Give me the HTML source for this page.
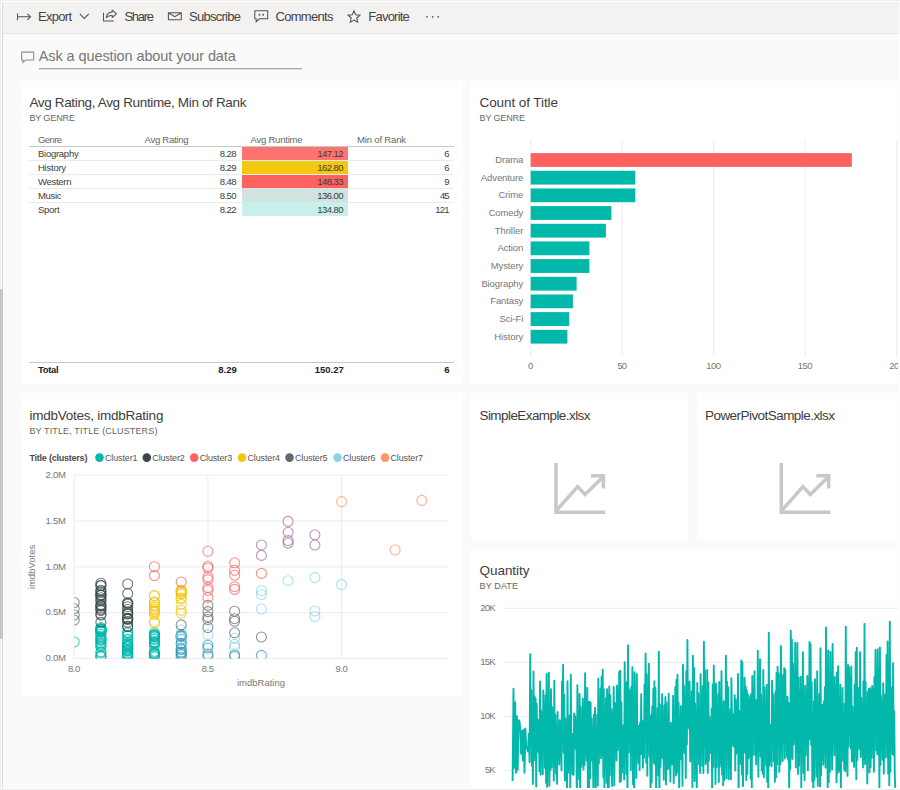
<!DOCTYPE html>
<html lang="en"><head><meta charset="utf-8"><title>Power BI Dashboard</title>
<style>
html,body{margin:0;padding:0;}
body{width:900px;height:790px;overflow:hidden;background:#fafafa;font-family:"Liberation Sans",sans-serif;position:relative;}
.t{position:absolute;white-space:nowrap;line-height:1;}
.abs{position:absolute;}
.tile{position:absolute;background:#fff;}
svg{position:absolute;left:0;top:0;overflow:visible;}
</style></head><body>

<div class="abs" style="left:0;top:0;width:900px;height:34px;background:#f3f2f1;"></div>
<div class="abs" style="left:3px;top:33px;width:897px;height:1px;background:#e6e5e4;"></div>
<div class="abs" style="left:0;top:0;width:900px;height:1px;background:#f0efee;"></div>
<div class="abs" style="left:1px;top:1px;width:899px;height:1px;background:#fff;"></div>
<div class="abs" style="left:0;top:0;width:1px;height:790px;background:#f0efee;"></div>
<div class="abs" style="left:1px;top:1px;width:1px;height:789px;background:#fff;"></div>
<div class="abs" style="left:2px;top:2px;width:1px;height:788px;background:#dddcdb;"></div>
<div class="abs" style="left:3px;top:788px;width:897px;height:1px;background:#fff;z-index:6;"></div>
<div class="abs" style="left:0;top:789px;width:900px;height:1px;background:#f0efee;z-index:6;"></div>
<div class="abs" style="left:898px;top:2px;width:2px;height:32px;background:#f8f7f6;"></div>
<div class="abs" style="left:0;top:289px;width:3px;height:350px;background:#c8c7c6;"></div>
<div class="abs" style="left:898px;top:34px;width:2px;height:756px;background:#fdfdfc;z-index:5;"></div>
<span class="t" style="left:38.00px;top:10.40px;font-size:13px;color:#454341;letter-spacing:-0.714px;">Export</span>
<span class="t" style="left:124.50px;top:10.40px;font-size:13px;color:#454341;letter-spacing:-1.297px;">Share</span>
<span class="t" style="left:189.00px;top:10.40px;font-size:13px;color:#454341;letter-spacing:-0.726px;">Subscribe</span>
<span class="t" style="left:275.50px;top:10.40px;font-size:13px;color:#454341;letter-spacing:-0.692px;">Comments</span>
<span class="t" style="left:368.30px;top:10.40px;font-size:13px;color:#454341;letter-spacing:-0.779px;">Favorite</span>
<svg width="900" height="40" viewBox="0 0 900 40" fill="none" stroke="#55534f" stroke-width="1.05">
<path d="M17.5 13.4V20.2M18 16.8H30.4M27.4 13.8L30.5 16.8L27.4 19.8"/>
<path d="M79.8 13.9L84.3 18.4L88.8 13.9"/>
<path d="M103.5 12.8V20.9H113.8"/>
<path d="M112.2 10.1L116.5 13.8L112.2 17.5V15.6C110 15.4 108 16 106.3 17.7C106.5 14.6 108.6 12.4 112.2 12.1Z" stroke-linejoin="round"/>
<path d="M168.4 12.7H181.3V19.8H168.4ZM168.6 13L174.8 16.7L181.1 13"/>
<path d="M254.8 10.7H267.7V18.8H259.4L256.2 21.8V18.8H254.8Z"/>
<g fill="#55534f" stroke="none"><circle cx="259.5" cy="14.7" r="0.95"/><circle cx="263.2" cy="14.7" r="0.95"/></g>
<path d="M354 10.9L355.7 14.75L359.95 15.15L356.76 18L357.7 22.2L354 20L350.3 22.2L351.24 18L348.05 15.15L352.3 14.75Z"/>
<g fill="#55534f" stroke="none"><circle cx="427" cy="16.8" r="0.9"/><circle cx="432.6" cy="16.8" r="0.9"/><circle cx="438.2" cy="16.8" r="0.9"/></g>
</svg>
<span class="t" style="left:38.80px;top:48.53px;font-size:14.5px;color:#777;letter-spacing:-0.100px;">Ask a question about your data</span>
<div class="abs" style="left:38.5px;top:68px;width:263px;height:1px;background:#a9a9a9;"></div><div class="abs" style="left:38.5px;top:69px;width:263px;height:1px;background:#dedede;"></div>
<svg width="900" height="80" viewBox="0 0 900 80" fill="none" stroke="#8a8a8a" stroke-width="1.05"><path d="M21.7 52.1H33.7V60H25.6L23 62.6V60H21.7Z"/></svg>
<div class="tile" style="left:21px;top:81px;width:442px;height:303px;"></div>
<span class="t" style="left:29.40px;top:95.57px;font-size:13.5px;color:#3d3d3d;letter-spacing:-0.346px;">Avg Rating, Avg Runtime, Min of Rank</span>
<span class="t" style="left:29.40px;top:114.08px;font-size:9px;color:#666;letter-spacing:-0.121px;">BY GENRE</span>
<span class="t" style="left:38.00px;top:134.96px;font-size:9.5px;color:#666;letter-spacing:-0.600px;">Genre</span>
<span class="t" style="left:144.50px;top:134.96px;font-size:9.5px;color:#666;letter-spacing:-0.255px;">Avg Rating</span>
<span class="t" style="left:250.50px;top:134.96px;font-size:9.5px;color:#666;letter-spacing:-0.221px;">Avg Runtime</span>
<span class="t" style="left:357.00px;top:134.96px;font-size:9.5px;color:#666;letter-spacing:-0.168px;">Min of Rank</span>
<div class="abs" style="left:29px;top:146px;width:425px;height:1px;background:#c8c8c8;"></div>
<div class="abs" style="left:241.5px;top:147.0px;width:106.5px;height:13.8px;background:#fd7370;"></div>
<div class="abs" style="left:29px;top:160.3px;width:425px;height:1px;background:#ebebeb;"></div>
<span class="t" style="left:38.00px;top:149.46px;font-size:9.5px;color:#3c3c3c;letter-spacing:-0.267px;">Biography</span>
<span class="t" style="left:219.86px;top:149.46px;font-size:9.5px;color:#3c3c3c;letter-spacing:-0.616px;">8.28</span>
<span class="t" style="left:317.35px;top:149.46px;font-size:9.5px;color:#3c3c3c;letter-spacing:-0.581px;">147.12</span>
<span class="t" style="left:444.22px;top:149.46px;font-size:9.5px;color:#3c3c3c;">6</span>
<div class="abs" style="left:241.5px;top:160.8px;width:106.5px;height:13.8px;background:#f2c811;"></div>
<div class="abs" style="left:29px;top:174.1px;width:425px;height:1px;background:#ebebeb;"></div>
<span class="t" style="left:38.00px;top:163.26px;font-size:9.5px;color:#3c3c3c;letter-spacing:-0.246px;">History</span>
<span class="t" style="left:219.86px;top:163.26px;font-size:9.5px;color:#3c3c3c;letter-spacing:-0.616px;">8.29</span>
<span class="t" style="left:317.35px;top:163.26px;font-size:9.5px;color:#3c3c3c;letter-spacing:-0.581px;">162.80</span>
<span class="t" style="left:444.22px;top:163.26px;font-size:9.5px;color:#3c3c3c;">6</span>
<div class="abs" style="left:241.5px;top:174.6px;width:106.5px;height:13.8px;background:#fd625e;"></div>
<div class="abs" style="left:29px;top:187.9px;width:425px;height:1px;background:#ebebeb;"></div>
<span class="t" style="left:38.00px;top:177.06px;font-size:9.5px;color:#3c3c3c;letter-spacing:-0.293px;">Western</span>
<span class="t" style="left:219.86px;top:177.06px;font-size:9.5px;color:#3c3c3c;letter-spacing:-0.616px;">8.48</span>
<span class="t" style="left:317.35px;top:177.06px;font-size:9.5px;color:#3c3c3c;letter-spacing:-0.581px;">148.33</span>
<span class="t" style="left:444.22px;top:177.06px;font-size:9.5px;color:#3c3c3c;">9</span>
<div class="abs" style="left:241.5px;top:188.4px;width:106.5px;height:13.8px;background:#d0e3e0;"></div>
<div class="abs" style="left:29px;top:201.7px;width:425px;height:1px;background:#ebebeb;"></div>
<span class="t" style="left:38.00px;top:190.86px;font-size:9.5px;color:#3c3c3c;letter-spacing:-0.310px;">Music</span>
<span class="t" style="left:219.86px;top:190.86px;font-size:9.5px;color:#3c3c3c;letter-spacing:-0.616px;">8.50</span>
<span class="t" style="left:317.35px;top:190.86px;font-size:9.5px;color:#3c3c3c;letter-spacing:-0.581px;">136.00</span>
<span class="t" style="left:439.99px;top:190.86px;font-size:9.5px;color:#3c3c3c;letter-spacing:-1.057px;">45</span>
<div class="abs" style="left:241.5px;top:202.2px;width:106.5px;height:13.8px;background:#c9efec;"></div>
<span class="t" style="left:38.00px;top:204.66px;font-size:9.5px;color:#3c3c3c;letter-spacing:-0.284px;">Sport</span>
<span class="t" style="left:219.86px;top:204.66px;font-size:9.5px;color:#3c3c3c;letter-spacing:-0.616px;">8.22</span>
<span class="t" style="left:317.35px;top:204.66px;font-size:9.5px;color:#3c3c3c;letter-spacing:-0.581px;">134.80</span>
<span class="t" style="left:435.24px;top:204.66px;font-size:9.5px;color:#3c3c3c;letter-spacing:-0.792px;">121</span>
<div class="abs" style="left:29px;top:362px;width:425px;height:1px;background:#c8c8c8;"></div>
<span class="t" style="left:38.00px;top:365.26px;font-size:9.5px;color:#222;letter-spacing:-0.330px;font-weight:bold;">Total</span>
<span class="t" style="left:218.31px;top:365.26px;font-size:9.5px;color:#222;font-weight:bold;">8.29</span>
<span class="t" style="left:314.75px;top:365.26px;font-size:9.5px;color:#222;font-weight:bold;">150.27</span>
<span class="t" style="left:444.22px;top:365.26px;font-size:9.5px;color:#222;font-weight:bold;">6</span>
<div class="tile" style="left:471px;top:81px;width:429px;height:303px;"></div>
<span class="t" style="left:479.50px;top:95.57px;font-size:13.5px;color:#3d3d3d;letter-spacing:-0.080px;">Count of Title</span>
<span class="t" style="left:479.50px;top:114.08px;font-size:9px;color:#666;letter-spacing:-0.121px;">BY GENRE</span>
<svg width="900" height="790" viewBox="0 0 900 790"><rect x="530.2" y="140" width="1" height="216.5" fill="#ececec"/><rect x="621.7" y="140" width="1" height="216.5" fill="#ececec"/><rect x="713.2" y="140" width="1" height="216.5" fill="#ececec"/><rect x="804.7" y="140" width="1" height="216.5" fill="#ececec"/><rect x="896.2" y="140" width="1" height="216.5" fill="#ececec"/><rect x="530.7" y="153.10" width="321.1" height="13.8" fill="#fd625e"/><rect x="530.7" y="170.77" width="104.6" height="13.8" fill="#01b8aa"/><rect x="530.7" y="188.44" width="104.6" height="13.8" fill="#01b8aa"/><rect x="530.7" y="206.11" width="80.7" height="13.8" fill="#01b8aa"/><rect x="530.7" y="223.78" width="75.2" height="13.8" fill="#01b8aa"/><rect x="530.7" y="241.45" width="58.7" height="13.8" fill="#01b8aa"/><rect x="530.7" y="259.12" width="58.7" height="13.8" fill="#01b8aa"/><rect x="530.7" y="276.79" width="45.9" height="13.8" fill="#01b8aa"/><rect x="530.7" y="294.46" width="42.2" height="13.8" fill="#01b8aa"/><rect x="530.7" y="312.13" width="38.5" height="13.8" fill="#01b8aa"/><rect x="530.7" y="329.80" width="36.7" height="13.8" fill="#01b8aa"/></svg>
<span class="t" style="left:495.37px;top:154.96px;font-size:9.5px;color:#777;letter-spacing:-0.143px;">Drama</span>
<span class="t" style="left:480.86px;top:172.96px;font-size:9.5px;color:#777;letter-spacing:-0.108px;">Adventure</span>
<span class="t" style="left:498.48px;top:189.96px;font-size:9.5px;color:#777;letter-spacing:-0.127px;">Crime</span>
<span class="t" style="left:488.63px;top:207.96px;font-size:9.5px;color:#777;letter-spacing:-0.141px;">Comedy</span>
<span class="t" style="left:494.85px;top:225.96px;font-size:9.5px;color:#777;letter-spacing:-0.083px;">Thriller</span>
<span class="t" style="left:497.43px;top:242.96px;font-size:9.5px;color:#777;letter-spacing:-0.106px;">Action</span>
<span class="t" style="left:490.72px;top:260.96px;font-size:9.5px;color:#777;letter-spacing:-0.111px;">Mystery</span>
<span class="t" style="left:481.38px;top:278.96px;font-size:9.5px;color:#777;letter-spacing:-0.107px;">Biography</span>
<span class="t" style="left:490.19px;top:295.96px;font-size:9.5px;color:#777;letter-spacing:-0.113px;">Fantasy</span>
<span class="t" style="left:499.51px;top:313.96px;font-size:9.5px;color:#777;letter-spacing:-0.097px;">Sci-Fi</span>
<span class="t" style="left:494.33px;top:331.96px;font-size:9.5px;color:#777;letter-spacing:-0.099px;">History</span>
<span class="t" style="left:528.06px;top:361.46px;font-size:9.5px;color:#777;">0</span>
<span class="t" style="left:617.23px;top:361.46px;font-size:9.5px;color:#777;letter-spacing:-0.634px;">50</span>
<span class="t" style="left:706.25px;top:361.46px;font-size:9.5px;color:#777;letter-spacing:-0.475px;">100</span>
<span class="t" style="left:797.75px;top:361.46px;font-size:9.5px;color:#777;letter-spacing:-0.475px;">150</span>
<span class="t" style="left:889.25px;top:361.46px;font-size:9.5px;color:#777;letter-spacing:-0.475px;">200</span>
<div class="tile" style="left:21px;top:393px;width:442px;height:303px;"></div>
<span class="t" style="left:29.40px;top:408.57px;font-size:13.5px;color:#3d3d3d;letter-spacing:-0.241px;">imdbVotes, imdbRating</span>
<span class="t" style="left:29.40px;top:427.18px;font-size:9px;color:#666;letter-spacing:0.139px;">BY TITLE, TITLE (CLUSTERS)</span>
<span class="t" style="left:29.40px;top:453.68px;font-size:9px;color:#4a4a4a;letter-spacing:-0.223px;font-weight:bold;">Title (clusters)</span>
<svg width="900" height="790" viewBox="0 0 900 790"><circle cx="99.5" cy="457.6" r="4.3" fill="#01b8aa"/><circle cx="146.8" cy="457.6" r="4.3" fill="#374649"/><circle cx="194.2" cy="457.6" r="4.3" fill="#fd625e"/><circle cx="242" cy="457.6" r="4.3" fill="#f2c80f"/><circle cx="289.5" cy="457.6" r="4.3" fill="#5f6b6d"/><circle cx="337.5" cy="457.6" r="4.3" fill="#8ad4eb"/><circle cx="385" cy="457.6" r="4.3" fill="#fe9666"/><rect x="74.2" y="658.0" width="374.0" height="1" fill="#ececec"/><rect x="74.2" y="612.2" width="374.0" height="1" fill="#ececec"/><rect x="74.2" y="566.4" width="374.0" height="1" fill="#ececec"/><rect x="74.2" y="520.5" width="374.0" height="1" fill="#ececec"/><rect x="74.2" y="474.7" width="374.0" height="1" fill="#ececec"/><rect x="73.7" y="475.2" width="1" height="183.3" fill="#ececec"/><rect x="207.4" y="475.2" width="1" height="183.3" fill="#ececec"/><rect x="341.1" y="475.2" width="1" height="183.3" fill="#ececec"/><clipPath id="cp"><rect x="74.2" y="465.2" width="384.0" height="193.3"/></clipPath><g clip-path="url(#cp)" fill="none" stroke-width="1.1"><circle cx="74.2" cy="602.5" r="5" stroke="#5f6b6d" stroke-opacity="0.72"/><circle cx="74.2" cy="608.7" r="5" stroke="#5f6b6d" stroke-opacity="0.72"/><circle cx="74.2" cy="615.0" r="5" stroke="#5f6b6d" stroke-opacity="0.72"/><circle cx="74.2" cy="620.0" r="5" stroke="#5f6b6d" stroke-opacity="0.72"/><circle cx="74.2" cy="642.0" r="5" stroke="#01b8aa" stroke-opacity="0.72"/><circle cx="100.9" cy="627.5" r="5" stroke="#01b8aa" stroke-opacity="0.72"/><circle cx="100.9" cy="628.6" r="5" stroke="#01b8aa" stroke-opacity="0.72"/><circle cx="100.9" cy="628.9" r="5" stroke="#01b8aa" stroke-opacity="0.72"/><circle cx="100.9" cy="629.2" r="5" stroke="#01b8aa" stroke-opacity="0.72"/><circle cx="100.9" cy="629.6" r="5" stroke="#01b8aa" stroke-opacity="0.72"/><circle cx="100.9" cy="629.6" r="5" stroke="#01b8aa" stroke-opacity="0.72"/><circle cx="100.9" cy="630.2" r="5" stroke="#01b8aa" stroke-opacity="0.72"/><circle cx="100.9" cy="631.0" r="5" stroke="#01b8aa" stroke-opacity="0.72"/><circle cx="100.9" cy="631.2" r="5" stroke="#01b8aa" stroke-opacity="0.72"/><circle cx="100.9" cy="631.8" r="5" stroke="#01b8aa" stroke-opacity="0.72"/><circle cx="100.9" cy="632.0" r="5" stroke="#01b8aa" stroke-opacity="0.72"/><circle cx="100.9" cy="634.1" r="5" stroke="#01b8aa" stroke-opacity="0.72"/><circle cx="100.9" cy="636.0" r="5" stroke="#01b8aa" stroke-opacity="0.72"/><circle cx="100.9" cy="637.1" r="5" stroke="#01b8aa" stroke-opacity="0.72"/><circle cx="100.9" cy="638.3" r="5" stroke="#01b8aa" stroke-opacity="0.72"/><circle cx="100.9" cy="639.2" r="5" stroke="#01b8aa" stroke-opacity="0.72"/><circle cx="100.9" cy="640.0" r="5" stroke="#01b8aa" stroke-opacity="0.72"/><circle cx="100.9" cy="640.3" r="5" stroke="#01b8aa" stroke-opacity="0.72"/><circle cx="100.9" cy="642.5" r="5" stroke="#01b8aa" stroke-opacity="0.72"/><circle cx="100.9" cy="643.3" r="5" stroke="#01b8aa" stroke-opacity="0.72"/><circle cx="100.9" cy="644.5" r="5" stroke="#01b8aa" stroke-opacity="0.72"/><circle cx="100.9" cy="646.0" r="5" stroke="#01b8aa" stroke-opacity="0.72"/><circle cx="100.9" cy="646.7" r="5" stroke="#01b8aa" stroke-opacity="0.72"/><circle cx="100.9" cy="651.9" r="5" stroke="#01b8aa" stroke-opacity="0.72"/><circle cx="100.9" cy="652.8" r="5" stroke="#01b8aa" stroke-opacity="0.72"/><circle cx="100.9" cy="655.5" r="5" stroke="#01b8aa" stroke-opacity="0.72"/><circle cx="100.9" cy="656.3" r="5" stroke="#01b8aa" stroke-opacity="0.72"/><circle cx="100.9" cy="657.0" r="5" stroke="#01b8aa" stroke-opacity="0.72"/><circle cx="100.9" cy="583.2" r="5" stroke="#374649" stroke-opacity="0.72"/><circle cx="100.9" cy="585.5" r="5" stroke="#374649" stroke-opacity="0.72"/><circle cx="100.9" cy="585.6" r="5" stroke="#374649" stroke-opacity="0.72"/><circle cx="100.9" cy="590.2" r="5" stroke="#374649" stroke-opacity="0.72"/><circle cx="100.9" cy="591.2" r="5" stroke="#374649" stroke-opacity="0.72"/><circle cx="100.9" cy="592.7" r="5" stroke="#374649" stroke-opacity="0.72"/><circle cx="100.9" cy="594.9" r="5" stroke="#374649" stroke-opacity="0.72"/><circle cx="100.9" cy="595.2" r="5" stroke="#374649" stroke-opacity="0.72"/><circle cx="100.9" cy="595.5" r="5" stroke="#374649" stroke-opacity="0.72"/><circle cx="100.9" cy="597.7" r="5" stroke="#374649" stroke-opacity="0.72"/><circle cx="100.9" cy="599.9" r="5" stroke="#374649" stroke-opacity="0.72"/><circle cx="100.9" cy="600.9" r="5" stroke="#374649" stroke-opacity="0.72"/><circle cx="100.9" cy="604.6" r="5" stroke="#374649" stroke-opacity="0.72"/><circle cx="100.9" cy="605.9" r="5" stroke="#374649" stroke-opacity="0.72"/><circle cx="100.9" cy="606.0" r="5" stroke="#374649" stroke-opacity="0.72"/><circle cx="100.9" cy="608.1" r="5" stroke="#374649" stroke-opacity="0.72"/><circle cx="100.9" cy="609.7" r="5" stroke="#374649" stroke-opacity="0.72"/><circle cx="100.9" cy="610.5" r="5" stroke="#374649" stroke-opacity="0.72"/><circle cx="100.9" cy="614.2" r="5" stroke="#374649" stroke-opacity="0.72"/><circle cx="100.9" cy="615.0" r="5" stroke="#374649" stroke-opacity="0.72"/><circle cx="100.9" cy="622.2" r="5" stroke="#374649" stroke-opacity="0.72"/><circle cx="127.7" cy="632.0" r="5" stroke="#01b8aa" stroke-opacity="0.72"/><circle cx="127.7" cy="633.0" r="5" stroke="#01b8aa" stroke-opacity="0.72"/><circle cx="127.7" cy="635.0" r="5" stroke="#01b8aa" stroke-opacity="0.72"/><circle cx="127.7" cy="635.8" r="5" stroke="#01b8aa" stroke-opacity="0.72"/><circle cx="127.7" cy="639.2" r="5" stroke="#01b8aa" stroke-opacity="0.72"/><circle cx="127.7" cy="639.8" r="5" stroke="#01b8aa" stroke-opacity="0.72"/><circle cx="127.7" cy="642.5" r="5" stroke="#01b8aa" stroke-opacity="0.72"/><circle cx="127.7" cy="643.4" r="5" stroke="#01b8aa" stroke-opacity="0.72"/><circle cx="127.7" cy="644.2" r="5" stroke="#01b8aa" stroke-opacity="0.72"/><circle cx="127.7" cy="645.1" r="5" stroke="#01b8aa" stroke-opacity="0.72"/><circle cx="127.7" cy="646.3" r="5" stroke="#01b8aa" stroke-opacity="0.72"/><circle cx="127.7" cy="646.4" r="5" stroke="#01b8aa" stroke-opacity="0.72"/><circle cx="127.7" cy="646.5" r="5" stroke="#01b8aa" stroke-opacity="0.72"/><circle cx="127.7" cy="646.9" r="5" stroke="#01b8aa" stroke-opacity="0.72"/><circle cx="127.7" cy="648.7" r="5" stroke="#01b8aa" stroke-opacity="0.72"/><circle cx="127.7" cy="649.4" r="5" stroke="#01b8aa" stroke-opacity="0.72"/><circle cx="127.7" cy="650.2" r="5" stroke="#01b8aa" stroke-opacity="0.72"/><circle cx="127.7" cy="650.9" r="5" stroke="#01b8aa" stroke-opacity="0.72"/><circle cx="127.7" cy="651.1" r="5" stroke="#01b8aa" stroke-opacity="0.72"/><circle cx="127.7" cy="653.0" r="5" stroke="#01b8aa" stroke-opacity="0.72"/><circle cx="127.7" cy="653.9" r="5" stroke="#01b8aa" stroke-opacity="0.72"/><circle cx="127.7" cy="653.9" r="5" stroke="#01b8aa" stroke-opacity="0.72"/><circle cx="127.7" cy="655.6" r="5" stroke="#01b8aa" stroke-opacity="0.72"/><circle cx="127.7" cy="656.5" r="5" stroke="#01b8aa" stroke-opacity="0.72"/><circle cx="127.7" cy="657.0" r="5" stroke="#01b8aa" stroke-opacity="0.72"/><circle cx="127.7" cy="584.0" r="5" stroke="#374649" stroke-opacity="0.72"/><circle cx="127.7" cy="593.5" r="5" stroke="#374649" stroke-opacity="0.72"/><circle cx="127.7" cy="602.7" r="5" stroke="#374649" stroke-opacity="0.72"/><circle cx="127.7" cy="603.2" r="5" stroke="#374649" stroke-opacity="0.72"/><circle cx="127.7" cy="604.1" r="5" stroke="#374649" stroke-opacity="0.72"/><circle cx="127.7" cy="606.7" r="5" stroke="#374649" stroke-opacity="0.72"/><circle cx="127.7" cy="609.5" r="5" stroke="#374649" stroke-opacity="0.72"/><circle cx="127.7" cy="611.9" r="5" stroke="#374649" stroke-opacity="0.72"/><circle cx="127.7" cy="613.7" r="5" stroke="#374649" stroke-opacity="0.72"/><circle cx="127.7" cy="614.0" r="5" stroke="#374649" stroke-opacity="0.72"/><circle cx="127.7" cy="618.2" r="5" stroke="#374649" stroke-opacity="0.72"/><circle cx="127.7" cy="618.6" r="5" stroke="#374649" stroke-opacity="0.72"/><circle cx="127.7" cy="618.7" r="5" stroke="#374649" stroke-opacity="0.72"/><circle cx="127.7" cy="619.5" r="5" stroke="#374649" stroke-opacity="0.72"/><circle cx="127.7" cy="622.3" r="5" stroke="#374649" stroke-opacity="0.72"/><circle cx="127.7" cy="626.4" r="5" stroke="#374649" stroke-opacity="0.72"/><circle cx="127.7" cy="626.6" r="5" stroke="#374649" stroke-opacity="0.72"/><circle cx="154.4" cy="632.8" r="5" stroke="#01b8aa" stroke-opacity="0.72"/><circle cx="154.4" cy="634.2" r="5" stroke="#01b8aa" stroke-opacity="0.72"/><circle cx="154.4" cy="634.8" r="5" stroke="#01b8aa" stroke-opacity="0.72"/><circle cx="154.4" cy="635.6" r="5" stroke="#01b8aa" stroke-opacity="0.72"/><circle cx="154.4" cy="635.9" r="5" stroke="#01b8aa" stroke-opacity="0.72"/><circle cx="154.4" cy="636.5" r="5" stroke="#01b8aa" stroke-opacity="0.72"/><circle cx="154.4" cy="637.1" r="5" stroke="#01b8aa" stroke-opacity="0.72"/><circle cx="154.4" cy="638.8" r="5" stroke="#01b8aa" stroke-opacity="0.72"/><circle cx="154.4" cy="639.5" r="5" stroke="#01b8aa" stroke-opacity="0.72"/><circle cx="154.4" cy="641.5" r="5" stroke="#01b8aa" stroke-opacity="0.72"/><circle cx="154.4" cy="642.3" r="5" stroke="#01b8aa" stroke-opacity="0.72"/><circle cx="154.4" cy="642.9" r="5" stroke="#01b8aa" stroke-opacity="0.72"/><circle cx="154.4" cy="643.7" r="5" stroke="#01b8aa" stroke-opacity="0.72"/><circle cx="154.4" cy="646.1" r="5" stroke="#01b8aa" stroke-opacity="0.72"/><circle cx="154.4" cy="651.4" r="5" stroke="#01b8aa" stroke-opacity="0.72"/><circle cx="154.4" cy="652.6" r="5" stroke="#01b8aa" stroke-opacity="0.72"/><circle cx="154.4" cy="653.7" r="5" stroke="#01b8aa" stroke-opacity="0.72"/><circle cx="154.4" cy="653.9" r="5" stroke="#01b8aa" stroke-opacity="0.72"/><circle cx="154.4" cy="654.2" r="5" stroke="#01b8aa" stroke-opacity="0.72"/><circle cx="154.4" cy="654.2" r="5" stroke="#01b8aa" stroke-opacity="0.72"/><circle cx="154.4" cy="656.0" r="5" stroke="#01b8aa" stroke-opacity="0.72"/><circle cx="154.4" cy="657.0" r="5" stroke="#01b8aa" stroke-opacity="0.72"/><circle cx="154.4" cy="595.6" r="5" stroke="#f2c80f" stroke-opacity="0.72"/><circle cx="154.4" cy="595.7" r="5" stroke="#f2c80f" stroke-opacity="0.72"/><circle cx="154.4" cy="602.0" r="5" stroke="#f2c80f" stroke-opacity="0.72"/><circle cx="154.4" cy="602.0" r="5" stroke="#f2c80f" stroke-opacity="0.72"/><circle cx="154.4" cy="602.8" r="5" stroke="#f2c80f" stroke-opacity="0.72"/><circle cx="154.4" cy="605.7" r="5" stroke="#f2c80f" stroke-opacity="0.72"/><circle cx="154.4" cy="607.1" r="5" stroke="#f2c80f" stroke-opacity="0.72"/><circle cx="154.4" cy="608.9" r="5" stroke="#f2c80f" stroke-opacity="0.72"/><circle cx="154.4" cy="609.7" r="5" stroke="#f2c80f" stroke-opacity="0.72"/><circle cx="154.4" cy="611.1" r="5" stroke="#f2c80f" stroke-opacity="0.72"/><circle cx="154.4" cy="611.7" r="5" stroke="#f2c80f" stroke-opacity="0.72"/><circle cx="154.4" cy="612.5" r="5" stroke="#f2c80f" stroke-opacity="0.72"/><circle cx="154.4" cy="614.5" r="5" stroke="#f2c80f" stroke-opacity="0.72"/><circle cx="154.4" cy="621.7" r="5" stroke="#f2c80f" stroke-opacity="0.72"/><circle cx="154.4" cy="623.0" r="5" stroke="#f2c80f" stroke-opacity="0.72"/><circle cx="154.4" cy="566.7" r="5" stroke="#fd625e" stroke-opacity="0.72"/><circle cx="154.4" cy="575.6" r="5" stroke="#fd625e" stroke-opacity="0.72"/><circle cx="181.2" cy="634.6" r="5" stroke="#3599b8" stroke-opacity="0.72"/><circle cx="181.2" cy="635.8" r="5" stroke="#3599b8" stroke-opacity="0.72"/><circle cx="181.2" cy="636.0" r="5" stroke="#3599b8" stroke-opacity="0.72"/><circle cx="181.2" cy="636.1" r="5" stroke="#3599b8" stroke-opacity="0.72"/><circle cx="181.2" cy="636.9" r="5" stroke="#3599b8" stroke-opacity="0.72"/><circle cx="181.2" cy="639.3" r="5" stroke="#3599b8" stroke-opacity="0.72"/><circle cx="181.2" cy="643.4" r="5" stroke="#3599b8" stroke-opacity="0.72"/><circle cx="181.2" cy="643.5" r="5" stroke="#3599b8" stroke-opacity="0.72"/><circle cx="181.2" cy="648.8" r="5" stroke="#3599b8" stroke-opacity="0.72"/><circle cx="181.2" cy="649.7" r="5" stroke="#3599b8" stroke-opacity="0.72"/><circle cx="181.2" cy="652.1" r="5" stroke="#3599b8" stroke-opacity="0.72"/><circle cx="181.2" cy="652.5" r="5" stroke="#3599b8" stroke-opacity="0.72"/><circle cx="181.2" cy="654.2" r="5" stroke="#3599b8" stroke-opacity="0.72"/><circle cx="181.2" cy="654.7" r="5" stroke="#3599b8" stroke-opacity="0.72"/><circle cx="181.2" cy="657.0" r="5" stroke="#3599b8" stroke-opacity="0.72"/><circle cx="181.2" cy="630.0" r="5" stroke="#8ad4eb" stroke-opacity="0.72"/><circle cx="181.2" cy="637.0" r="5" stroke="#8ad4eb" stroke-opacity="0.72"/><circle cx="181.2" cy="624.9" r="5" stroke="#5f6b6d" stroke-opacity="0.72"/><circle cx="181.2" cy="590.3" r="5" stroke="#f2c80f" stroke-opacity="0.72"/><circle cx="181.2" cy="590.3" r="5" stroke="#f2c80f" stroke-opacity="0.72"/><circle cx="181.2" cy="590.9" r="5" stroke="#f2c80f" stroke-opacity="0.72"/><circle cx="181.2" cy="591.5" r="5" stroke="#f2c80f" stroke-opacity="0.72"/><circle cx="181.2" cy="592.6" r="5" stroke="#f2c80f" stroke-opacity="0.72"/><circle cx="181.2" cy="593.8" r="5" stroke="#f2c80f" stroke-opacity="0.72"/><circle cx="181.2" cy="594.0" r="5" stroke="#f2c80f" stroke-opacity="0.72"/><circle cx="181.2" cy="598.1" r="5" stroke="#f2c80f" stroke-opacity="0.72"/><circle cx="181.2" cy="598.7" r="5" stroke="#f2c80f" stroke-opacity="0.72"/><circle cx="181.2" cy="604.4" r="5" stroke="#f2c80f" stroke-opacity="0.72"/><circle cx="181.2" cy="610.4" r="5" stroke="#f2c80f" stroke-opacity="0.72"/><circle cx="181.2" cy="613.3" r="5" stroke="#f2c80f" stroke-opacity="0.72"/><circle cx="181.2" cy="582.0" r="5" stroke="#fd625e" stroke-opacity="0.72"/><circle cx="207.9" cy="645.2" r="5" stroke="#3599b8" stroke-opacity="0.72"/><circle cx="207.9" cy="648.0" r="5" stroke="#3599b8" stroke-opacity="0.72"/><circle cx="207.9" cy="654.0" r="5" stroke="#3599b8" stroke-opacity="0.72"/><circle cx="207.9" cy="656.2" r="5" stroke="#3599b8" stroke-opacity="0.72"/><circle cx="207.9" cy="634.6" r="5" stroke="#8ad4eb" stroke-opacity="0.72"/><circle cx="207.9" cy="605.4" r="5" stroke="#5f6b6d" stroke-opacity="0.72"/><circle cx="207.9" cy="611.6" r="5" stroke="#5f6b6d" stroke-opacity="0.72"/><circle cx="207.9" cy="616.9" r="5" stroke="#5f6b6d" stroke-opacity="0.72"/><circle cx="207.9" cy="619.5" r="5" stroke="#5f6b6d" stroke-opacity="0.72"/><circle cx="207.9" cy="627.5" r="5" stroke="#5f6b6d" stroke-opacity="0.72"/><circle cx="207.9" cy="551.3" r="5" stroke="#fd625e" stroke-opacity="0.72"/><circle cx="207.9" cy="566.3" r="5" stroke="#fd625e" stroke-opacity="0.72"/><circle cx="207.9" cy="568.0" r="5" stroke="#fd625e" stroke-opacity="0.72"/><circle cx="207.9" cy="577.0" r="5" stroke="#fd625e" stroke-opacity="0.72"/><circle cx="207.9" cy="579.6" r="5" stroke="#fd625e" stroke-opacity="0.72"/><circle cx="207.9" cy="587.6" r="5" stroke="#fd625e" stroke-opacity="0.72"/><circle cx="207.9" cy="590.3" r="5" stroke="#fd625e" stroke-opacity="0.72"/><circle cx="207.9" cy="597.4" r="5" stroke="#fd625e" stroke-opacity="0.72"/><circle cx="234.6" cy="655.0" r="5" stroke="#3599b8" stroke-opacity="0.72"/><circle cx="234.6" cy="656.2" r="5" stroke="#3599b8" stroke-opacity="0.72"/><circle cx="234.6" cy="638.2" r="5" stroke="#8ad4eb" stroke-opacity="0.72"/><circle cx="234.6" cy="644.4" r="5" stroke="#8ad4eb" stroke-opacity="0.72"/><circle cx="234.6" cy="647.4" r="5" stroke="#8ad4eb" stroke-opacity="0.72"/><circle cx="234.6" cy="611.2" r="5" stroke="#5f6b6d" stroke-opacity="0.72"/><circle cx="234.6" cy="618.7" r="5" stroke="#5f6b6d" stroke-opacity="0.72"/><circle cx="234.6" cy="621.3" r="5" stroke="#5f6b6d" stroke-opacity="0.72"/><circle cx="234.6" cy="632.8" r="5" stroke="#5f6b6d" stroke-opacity="0.72"/><circle cx="234.6" cy="562.8" r="5" stroke="#fd625e" stroke-opacity="0.72"/><circle cx="234.6" cy="570.4" r="5" stroke="#fd625e" stroke-opacity="0.72"/><circle cx="234.6" cy="575.2" r="5" stroke="#fd625e" stroke-opacity="0.72"/><circle cx="234.6" cy="586.7" r="5" stroke="#fd625e" stroke-opacity="0.72"/><circle cx="234.6" cy="589.4" r="5" stroke="#fd625e" stroke-opacity="0.72"/><circle cx="261.4" cy="655.4" r="5" stroke="#3599b8" stroke-opacity="0.72"/><circle cx="261.4" cy="637.0" r="5" stroke="#5f6b6d" stroke-opacity="0.72"/><circle cx="261.4" cy="590.7" r="5" stroke="#8ad4eb" stroke-opacity="0.72"/><circle cx="261.4" cy="594.7" r="5" stroke="#8ad4eb" stroke-opacity="0.72"/><circle cx="261.4" cy="609.0" r="5" stroke="#8ad4eb" stroke-opacity="0.72"/><circle cx="261.4" cy="573.4" r="5" stroke="#fd625e" stroke-opacity="0.72"/><circle cx="261.4" cy="545.0" r="5" stroke="#a66999" stroke-opacity="0.72"/><circle cx="261.4" cy="555.4" r="5" stroke="#a66999" stroke-opacity="0.72"/><circle cx="288.1" cy="521.4" r="5" stroke="#a66999" stroke-opacity="0.72"/><circle cx="288.1" cy="532.3" r="5" stroke="#a66999" stroke-opacity="0.72"/><circle cx="288.1" cy="540.5" r="5" stroke="#a66999" stroke-opacity="0.72"/><circle cx="288.1" cy="543.0" r="5" stroke="#a66999" stroke-opacity="0.72"/><circle cx="288.1" cy="580.7" r="5" stroke="#8ad4eb" stroke-opacity="0.72"/><circle cx="314.9" cy="534.8" r="5" stroke="#a66999" stroke-opacity="0.72"/><circle cx="314.9" cy="545.0" r="5" stroke="#a66999" stroke-opacity="0.72"/><circle cx="314.9" cy="577.6" r="5" stroke="#8ad4eb" stroke-opacity="0.72"/><circle cx="314.9" cy="611.0" r="5" stroke="#8ad4eb" stroke-opacity="0.72"/><circle cx="314.9" cy="616.5" r="5" stroke="#8ad4eb" stroke-opacity="0.72"/><circle cx="341.6" cy="501.6" r="5" stroke="#fe9666" stroke-opacity="0.72"/><circle cx="341.6" cy="584.6" r="5" stroke="#8ad4eb" stroke-opacity="0.72"/><circle cx="395.1" cy="550.0" r="5" stroke="#fe9666" stroke-opacity="0.72"/><circle cx="421.8" cy="500.4" r="5" stroke="#fe9666" stroke-opacity="0.72"/></g></svg>
<span class="t" style="left:105.00px;top:453.68px;font-size:9px;color:#555;letter-spacing:-0.144px;">Cluster1</span>
<span class="t" style="left:152.30px;top:453.68px;font-size:9px;color:#555;letter-spacing:-0.144px;">Cluster2</span>
<span class="t" style="left:199.70px;top:453.68px;font-size:9px;color:#555;letter-spacing:-0.144px;">Cluster3</span>
<span class="t" style="left:247.50px;top:453.68px;font-size:9px;color:#555;letter-spacing:-0.144px;">Cluster4</span>
<span class="t" style="left:295.00px;top:453.68px;font-size:9px;color:#555;letter-spacing:-0.144px;">Cluster5</span>
<span class="t" style="left:343.00px;top:453.68px;font-size:9px;color:#555;letter-spacing:-0.144px;">Cluster6</span>
<span class="t" style="left:390.50px;top:453.68px;font-size:9px;color:#555;letter-spacing:-0.144px;">Cluster7</span>
<span class="t" style="left:45.50px;top:652.96px;font-size:9.5px;color:#777;letter-spacing:-0.206px;">0.0M</span>
<span class="t" style="left:45.50px;top:606.96px;font-size:9.5px;color:#777;letter-spacing:-0.206px;">0.5M</span>
<span class="t" style="left:45.50px;top:561.96px;font-size:9.5px;color:#777;letter-spacing:-0.206px;">1.0M</span>
<span class="t" style="left:45.50px;top:515.96px;font-size:9.5px;color:#777;letter-spacing:-0.206px;">1.5M</span>
<span class="t" style="left:45.50px;top:469.96px;font-size:9.5px;color:#777;letter-spacing:-0.206px;">2.0M</span>
<span class="t" style="left:67.99px;top:663.76px;font-size:9.5px;color:#777;letter-spacing:-0.396px;">8.0</span>
<span class="t" style="left:201.69px;top:663.76px;font-size:9.5px;color:#777;letter-spacing:-0.396px;">8.5</span>
<span class="t" style="left:335.39px;top:663.76px;font-size:9.5px;color:#777;letter-spacing:-0.396px;">9.0</span>
<span class="t" style="left:237.00px;top:677.96px;font-size:9.5px;color:#777;letter-spacing:-0.005px;">imdbRating</span>
<span class="t" style="left:29px;top:567px;font-size:9.5px;color:#777;transform:translate(-50%,-50%) rotate(-90deg);transform-origin:center;left:32.3px;">imdbVotes</span>
<div class="tile" style="left:471px;top:393px;width:217px;height:147px;"></div>
<div class="tile" style="left:696.5px;top:393px;width:204px;height:147px;"></div>
<span class="t" style="left:479.50px;top:408.57px;font-size:13.5px;color:#3d3d3d;letter-spacing:-0.576px;">SimpleExample.xlsx</span>
<span class="t" style="left:705.00px;top:408.57px;font-size:13.5px;color:#3d3d3d;letter-spacing:-0.552px;">PowerPivotSample.xlsx</span>
<svg width="900" height="790" viewBox="0 0 900 790" fill="none" stroke="#c8c8c8" stroke-width="3.5"><path d="M556 463V512.3H605.2" /><path d="M556.5 510.5L577.7 486.6L585 494.6L603 477" /><path d="M591 475.8H603.4V488.5" /><g transform="translate(225.3,0)"><path d="M556 463V512.3H605.2" /><path d="M556.5 510.5L577.7 486.6L585 494.6L603 477" /><path d="M591 475.8H603.4V488.5" /></g></svg>
<div class="tile" style="left:471px;top:549px;width:429px;height:241px;"></div>
<span class="t" style="left:479.50px;top:563.57px;font-size:13.5px;color:#3d3d3d;letter-spacing:-0.039px;">Quantity</span>
<span class="t" style="left:479.50px;top:581.58px;font-size:9px;color:#666;letter-spacing:0.137px;">BY DATE</span>
<svg width="900" height="790" viewBox="0 0 900 790"><rect x="503.5" y="607.8" width="397" height="1" fill="#ececec"/><rect x="503.5" y="661.9" width="397" height="1" fill="#ececec"/><rect x="503.5" y="715.9" width="397" height="1" fill="#ececec"/><rect x="503.5" y="769.9" width="397" height="1" fill="#ececec"/><polyline fill="none" stroke="#01b8aa" stroke-width="1.9" stroke-linejoin="round" points="512.6,781.1 513.5,688.7 514.3,767.8 515.2,702.5 516.0,772.7 516.9,716.2 517.7,769.8 518.6,720.1 519.4,721.0 520.3,728.9 521.1,753.8 522.0,730.9 522.8,760.5 523.7,729.8 524.5,772.8 525.4,728.4 526.2,748.3 527.1,748.3 527.9,751.6 528.8,733.8 529.6,762.0 530.2,654.2 530.7,745.8 531.3,690.0 531.8,765.7 532.4,735.3 532.9,784.1 533.5,671.4 534.0,760.4 534.6,696.6 535.1,739.4 535.6,698.7 536.2,786.5 536.7,703.6 537.3,752.0 537.8,719.4 538.4,750.5 538.9,734.4 539.5,771.4 540.0,681.4 540.6,774.7 541.1,710.3 541.7,757.4 542.2,713.4 542.8,774.2 543.3,690.4 543.9,749.2 544.4,704.7 545.0,767.9 545.5,695.5 546.1,782.9 546.6,673.9 547.2,787.0 547.7,745.6 548.3,758.5 548.8,672.6 549.4,785.7 549.9,739.5 550.5,770.3 551.0,689.2 551.6,767.6 552.1,707.1 552.7,735.4 553.2,724.0 553.8,780.8 554.3,680.8 554.9,766.7 555.4,714.7 556.0,773.8 556.5,725.2 557.1,783.7 557.6,711.9 558.2,757.2 558.7,727.1 559.3,764.5 559.8,720.3 560.4,746.9 560.9,730.2 561.5,770.4 562.0,681.8 562.6,723.7 563.1,664.8 563.7,752.8 564.2,694.7 564.8,780.4 565.3,718.4 565.9,780.5 566.4,728.4 567.0,787.9 567.5,681.1 568.1,772.7 568.6,729.2 569.2,770.0 569.7,715.3 570.3,790.8 570.8,674.6 571.4,759.4 571.9,736.7 572.5,774.5 573.0,733.6 573.6,774.8 574.1,713.5 574.7,726.6 575.2,716.3 575.8,748.9 576.3,736.6 576.9,802.8 577.4,685.2 578.0,762.5 578.5,721.0 579.1,779.2 579.6,693.9 580.2,802.8 580.7,706.7 581.3,766.9 581.8,738.8 582.4,763.7 582.9,698.6 583.5,769.6 584.0,719.9 584.6,765.1 585.1,673.3 585.7,755.5 586.2,700.9 586.8,760.9 587.3,688.0 587.9,787.9 588.4,702.2 589.0,791.6 589.5,701.8 590.1,778.3 590.6,702.6 591.2,760.7 591.7,718.5 592.3,747.0 592.8,741.6 593.4,791.8 593.9,714.6 594.5,768.3 595.0,707.7 595.6,799.9 596.1,732.8 596.7,771.2 597.2,714.4 597.8,785.7 598.3,678.8 598.9,763.3 599.4,721.1 600.0,754.0 600.5,688.5 601.1,758.3 601.6,676.6 602.2,754.8 602.7,669.8 603.3,777.3 603.8,689.4 604.4,791.2 604.9,714.2 605.5,749.9 606.0,697.9 606.6,782.7 607.1,689.1 607.7,790.3 608.2,694.6 608.8,788.7 609.3,686.5 609.9,775.1 610.4,695.8 611.0,766.3 611.5,709.4 612.1,786.0 612.6,713.4 613.2,755.9 613.7,687.0 614.3,785.4 614.8,702.6 615.4,751.5 615.9,703.9 616.5,760.6 617.0,685.5 617.6,750.3 618.1,691.0 618.7,747.0 619.2,671.6 619.8,782.1 620.3,670.9 620.9,781.2 621.4,702.4 622.0,772.7 622.5,728.8 623.1,766.1 623.6,725.1 624.2,779.6 624.7,662.1 625.3,756.3 625.8,684.2 626.4,774.0 626.9,681.7 627.5,800.6 628.0,645.3 628.6,752.4 629.1,689.1 629.7,743.5 630.2,691.5 630.8,770.2 631.3,687.0 631.9,747.6 632.4,667.3 633.0,784.2 633.5,697.2 634.1,793.6 634.6,672.3 635.2,760.4 635.7,705.3 636.3,778.0 636.8,674.0 637.4,756.6 637.9,725.6 638.5,763.3 639.0,726.3 639.6,770.1 640.1,722.6 640.7,753.9 641.2,694.3 641.8,754.3 642.3,727.5 642.9,767.8 643.4,721.0 644.0,758.0 644.5,684.4 645.1,716.3 645.6,653.5 646.2,762.7 646.7,674.1 647.3,775.8 647.8,704.4 648.4,727.3 648.9,663.8 649.5,756.2 650.0,727.4 650.6,802.8 651.1,715.2 651.7,782.6 652.2,706.8 652.8,748.8 653.3,688.9 653.9,763.0 654.4,681.2 655.0,764.3 655.5,687.9 656.1,792.8 656.6,733.0 657.2,749.5 657.7,708.3 658.3,775.2 658.8,651.7 659.4,802.8 659.9,704.1 660.5,767.2 661.0,736.0 661.6,758.2 662.1,694.3 662.7,755.5 663.2,714.7 663.8,779.7 664.3,705.3 664.9,761.4 665.4,697.0 666.0,784.5 666.5,702.7 667.1,765.9 667.6,769.3 668.2,768.4 668.7,693.7 669.3,760.7 669.8,743.0 670.4,781.5 670.9,722.7 671.5,764.3 672.0,737.5 672.6,764.3 673.1,695.8 673.7,783.3 674.2,742.0 674.8,761.1 675.3,687.0 675.9,775.6 676.4,679.9 677.0,772.9 677.5,674.8 678.1,768.4 678.6,702.4 679.2,793.8 679.7,744.9 680.3,744.5 680.8,706.3 681.4,759.3 681.9,715.2 682.5,785.9 683.0,664.7 683.6,749.2 684.1,685.8 684.7,753.1 685.2,697.7 685.8,778.0 686.3,671.2 686.9,744.6 687.4,640.0 688.0,727.0 688.5,711.5 689.1,728.6 689.6,681.4 690.2,761.6 690.7,699.3 691.3,756.5 691.8,691.2 692.4,787.9 692.9,655.7 693.5,741.6 694.0,668.0 694.6,781.1 695.1,703.1 695.7,738.4 696.2,714.7 696.8,792.7 697.3,682.9 697.9,734.7 698.4,693.5 699.0,764.4 699.5,706.7 700.1,773.1 700.6,674.1 701.2,729.8 701.7,703.2 702.3,766.0 702.8,685.9 703.4,773.0 703.9,641.6 704.5,746.5 705.0,670.1 705.6,764.0 706.1,704.1 706.7,760.7 707.2,670.0 707.8,773.1 708.3,682.5 708.9,760.8 709.4,716.7 710.0,753.2 710.5,720.4 711.1,748.4 711.6,708.9 712.2,802.8 712.7,684.4 713.3,767.0 713.8,665.4 714.4,736.2 714.9,694.1 715.5,784.1 716.0,683.4 716.6,767.0 717.1,704.2 717.7,747.4 718.2,694.3 718.8,782.1 719.3,681.7 719.9,766.8 720.4,699.4 721.0,762.7 721.5,671.3 722.1,774.4 722.6,717.9 723.2,785.2 723.7,701.2 724.3,780.1 724.8,709.8 725.4,758.5 725.9,655.8 726.5,778.4 727.0,681.5 727.6,750.1 728.1,687.3 728.7,779.3 729.2,713.4 729.8,767.7 730.3,709.1 730.9,779.2 731.4,678.1 732.0,719.5 732.5,736.3 733.1,745.8 733.6,714.1 734.2,746.9 734.7,695.1 735.3,770.5 735.8,699.5 736.4,753.5 736.9,712.1 737.5,742.9 738.0,673.9 738.6,802.8 739.1,710.7 739.7,736.8 740.2,725.7 740.8,764.1 741.3,660.5 741.9,774.4 742.4,662.4 743.0,786.3 743.5,698.5 744.1,748.9 744.6,677.8 745.2,752.9 745.7,686.5 746.3,780.0 746.8,690.1 747.4,774.1 747.9,694.4 748.5,758.3 749.0,698.9 749.6,750.7 750.1,696.3 750.7,778.5 751.2,694.3 751.8,788.5 752.3,675.9 752.9,755.0 753.4,689.1 754.0,735.8 754.5,671.1 755.1,754.9 755.6,699.7 756.2,764.4 756.7,705.0 757.3,749.9 757.8,650.8 758.4,776.7 758.9,677.4 759.5,751.4 760.0,659.3 760.6,756.8 761.1,694.1 761.7,770.4 762.2,708.9 762.8,773.9 763.3,669.9 763.9,777.2 764.4,687.4 765.0,762.1 765.5,721.2 766.1,765.5 766.6,684.6 767.2,782.0 767.7,706.7 768.3,802.8 768.8,632.6 769.4,765.5 769.9,724.1 770.5,761.1 771.0,726.0 771.6,766.2 772.1,680.6 772.7,715.6 773.2,694.5 773.8,761.3 774.3,716.9 774.9,781.8 775.4,691.8 776.0,777.4 776.5,672.9 777.1,764.2 777.6,666.6 778.2,746.7 778.7,673.4 779.3,771.9 779.8,701.2 780.4,764.3 780.9,645.9 781.5,727.7 782.0,726.5 782.6,761.1 783.1,675.3 783.7,742.7 784.2,668.1 784.8,758.5 785.3,669.8 785.9,742.1 786.4,714.9 787.0,756.9 787.5,696.8 788.1,759.7 788.6,703.0 789.2,795.6 789.7,712.5 790.3,769.1 790.8,630.6 791.4,756.7 791.9,639.8 792.5,759.0 793.0,663.4 793.6,744.5 794.1,708.0 794.7,740.5 795.2,642.7 795.8,767.5 796.3,686.3 796.9,752.4 797.4,642.9 798.0,774.1 798.5,677.6 799.1,765.8 799.6,691.5 800.2,752.8 800.7,676.8 801.3,789.0 801.8,685.9 802.4,748.7 802.9,652.3 803.5,772.9 804.0,714.2 804.6,780.3 805.1,685.6 805.7,755.3 806.2,690.0 806.8,746.0 807.3,676.0 807.9,770.4 808.4,681.7 809.0,739.9 809.5,642.0 810.1,738.1 810.6,644.1 811.2,745.0 811.7,682.3 812.3,781.4 812.8,741.7 813.4,801.5 813.9,701.1 814.5,779.8 815.0,679.2 815.6,754.6 816.1,701.6 816.7,776.6 817.2,671.2 817.8,785.8 818.3,705.7 818.9,746.9 819.4,693.6 820.0,786.6 820.5,648.2 821.1,775.4 821.6,704.6 822.2,759.5 822.7,705.2 823.3,764.7 823.8,701.5 824.4,752.8 824.9,687.2 825.5,767.7 826.0,627.4 826.6,736.5 827.1,676.6 827.7,792.2 828.2,650.5 828.8,782.0 829.3,691.5 829.9,771.9 830.4,652.0 831.0,753.7 831.5,687.0 832.1,769.6 832.6,643.9 833.2,740.8 833.7,700.5 834.3,755.2 834.8,677.0 835.4,743.7 835.9,686.2 836.5,782.4 837.0,672.5 837.6,773.1 838.1,666.1 838.7,770.1 839.2,730.5 839.8,771.8 840.3,684.8 840.9,788.1 841.4,708.7 842.0,736.4 842.5,688.0 843.1,760.9 843.6,714.0 844.2,769.5 844.7,703.7 845.3,771.2 845.8,626.8 846.4,765.1 846.9,725.5 847.5,775.9 848.0,664.9 848.6,746.6 849.1,667.3 849.7,735.4 850.2,677.8 850.8,748.6 851.3,666.5 851.9,761.2 852.4,706.4 853.0,761.2 853.5,729.2 854.1,766.9 854.6,684.4 855.2,756.0 855.7,652.1 856.3,779.2 856.8,647.7 857.4,760.1 857.9,725.0 858.5,730.8 859.0,687.6 859.6,749.0 860.1,652.3 860.7,757.1 861.2,697.8 861.8,728.3 862.3,710.9 862.9,767.5 863.4,681.1 864.0,759.5 864.5,624.0 865.1,764.3 865.6,682.0 866.2,739.9 866.7,713.5 867.3,783.6 867.8,691.9 868.4,741.8 868.9,689.0 869.5,772.4 870.0,688.2 870.6,767.2 871.1,690.0 871.7,757.8 872.2,685.9 872.8,744.8 873.3,690.4 873.9,771.8 874.4,676.9 875.0,727.0 875.5,649.9 876.1,750.6 876.6,714.0 877.2,754.0 877.7,649.1 878.3,754.5 878.8,669.3 879.4,790.7 879.9,647.5 880.5,765.1 881.0,695.8 881.6,738.3 882.1,703.6 882.7,759.9 883.2,683.3 883.8,773.7 884.3,694.5 884.9,757.7 885.4,700.3 886.0,726.2 886.5,655.3 887.1,757.4 887.6,641.4 888.2,773.7 888.7,664.9 889.3,785.4 889.8,621.7 890.4,771.9 890.9,695.7 891.5,706.8 892.0,687.4 892.6,754.2 893.1,663.2 893.7,755.0 894.2,711.1 894.8,775.7 895.4,792.0"/></svg>
<span class="t" style="left:480.29px;top:602.96px;font-size:9.5px;color:#777;letter-spacing:-0.845px;">20K</span>
<span class="t" style="left:480.29px;top:656.96px;font-size:9.5px;color:#777;letter-spacing:-0.845px;">15K</span>
<span class="t" style="left:480.29px;top:710.96px;font-size:9.5px;color:#777;letter-spacing:-0.845px;">10K</span>
<span class="t" style="left:485.04px;top:764.96px;font-size:9.5px;color:#777;letter-spacing:-1.162px;">5K</span>
</body></html>
